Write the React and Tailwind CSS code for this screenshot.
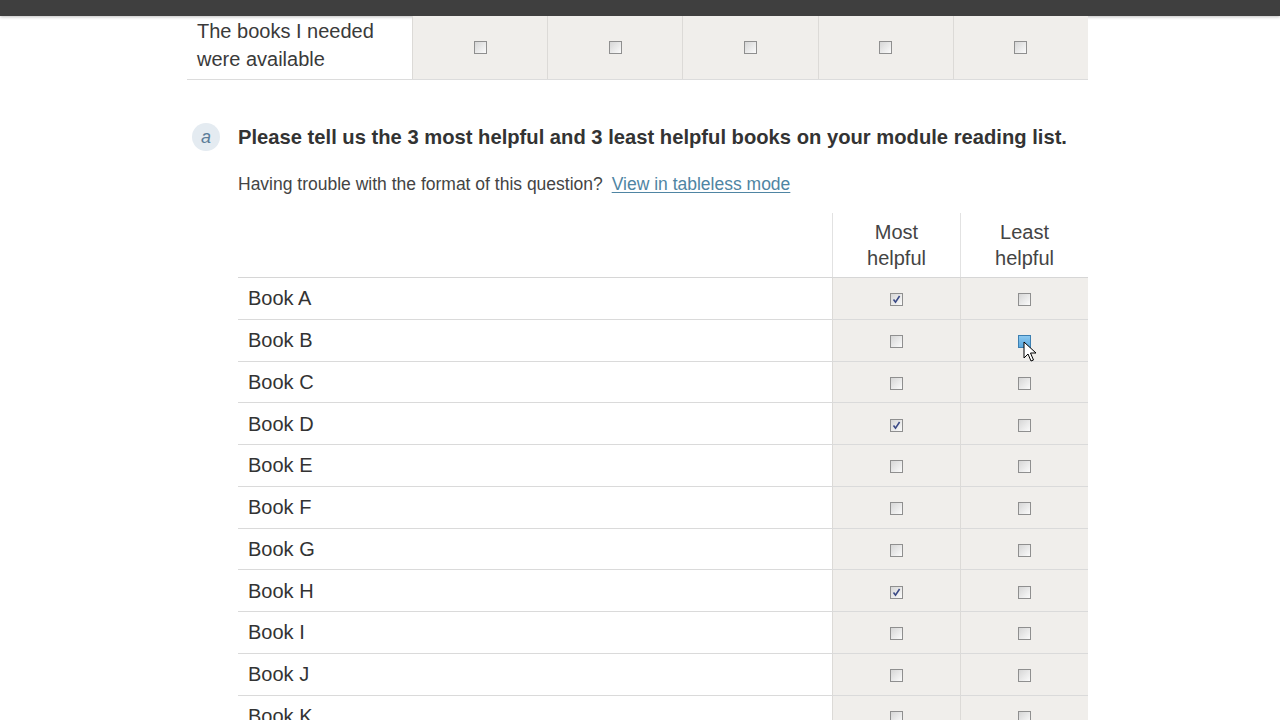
import React from 'react';

const books = ['A', 'B', 'C', 'D', 'E', 'F', 'G', 'H', 'I', 'J', 'K'];
const mostChecked = ['A', 'D', 'H'];

const Checkbox = ({ checked, hover }) => {
  if (hover) {
    return (
      <span className="block w-[13px] h-[13px] border border-[#3c7fb1] bg-gradient-to-b from-[#8cc8ef] to-[#5aa9e0]"></span>
    );
  }
  return (
    <span className="relative flex items-center justify-center w-[13px] h-[13px] border border-[#8f8f8f] bg-gradient-to-br from-[#d6d6d6] to-[#fbfbfb]">
      {checked && (
        <svg width="9" height="9" viewBox="0 0 9 9" className="block">
          <path d="M1.5 4.5 L3.5 7.2 L7.6 1" fill="none" stroke="#3b4a86" strokeWidth="1.6" />
        </svg>
      )}
    </span>
  );
};

const Cursor = () => (
  <svg width="14" height="22" viewBox="0 0 14 22" className="absolute left-[5px] top-[6px]">
    <path d="M1 1 L1 17 L5 13 L8 20 L10.5 19 L7.5 12 L13 12 Z" fill="#fff" stroke="#000" strokeWidth="1" strokeLinejoin="round" />
  </svg>
);

export default function App() {
  return (
    <div className="bg-white text-[#333] font-['Liberation_Sans',Arial,sans-serif] overflow-hidden h-[720px]">
      {/* window bar */}
      <div className="h-4 bg-[#3f3f3f] shadow-[0_1px_3px_rgba(0,0,0,0.25)]"></div>

      {/* previous question row */}
      <div className="ml-[187px] w-[901px] flex h-[64px] border-b border-[#dcdcdc]">
        <div className="w-[225px] pl-[10px] pt-[1px] text-[20px] leading-[28px] text-[#3a3a3a]">
          The books I needed were available
        </div>
        {[0, 1, 2, 3, 4].map((i) => (
          <div key={i} className="flex-1 bg-[#f0eeeb] border-l border-[#dcdad7] flex items-center justify-center">
            <Checkbox />
          </div>
        ))}
      </div>

      {/* question heading */}
      <div className="ml-[192px] mt-[43px] flex items-center gap-[18px] h-7">
        <div className="w-7 h-7 rounded-full bg-[#e4ebf1] flex items-center justify-center">
          <span className="italic text-[18px] text-[#5b7c98] leading-none -mt-[1px]">a</span>
        </div>
        <h2 className="font-bold text-[20.2px] leading-[28px] text-[#333]">
          Please tell us the 3 most helpful and 3 least helpful books on your module reading list.
        </h2>
      </div>

      <div className="ml-[238px] mt-[21px] text-[17.5px] leading-[24px] text-[#444]">
        Having trouble with the format of this question?{' '}
        <a className="ml-[4px] text-[#4f85a3] underline underline-offset-2">View in tableless mode</a>
      </div>

      {/* matrix */}
      <div className="ml-[238px] mt-[17px] w-[850px]">
        <div className="flex h-[65px] border-b border-[#d6d6d6]">
          <div className="flex-1"></div>
          <div className="w-32 border-l border-[#e2e2e2] text-center text-[20px] leading-[26px] text-[#444] pt-[6px]">
            Most<br />helpful
          </div>
          <div className="w-32 border-l border-[#e2e2e2] text-center text-[20px] leading-[26px] text-[#444] pt-[6px]">
            Least<br />helpful
          </div>
        </div>
        {books.map((b) => (
          <div key={b} className="flex h-[41.75px] border-b border-[#dadada]">
            <div className="flex-1 pl-[10px] flex items-center text-[20px] text-[#333]">Book {b}</div>
            <div className="w-32 pt-[3px] bg-[#f0eeeb] border-l border-[#dcdad7] flex items-center justify-center">
              <Checkbox checked={mostChecked.includes(b)} />
            </div>
            <div className="w-32 pt-[3px] bg-[#f0eeeb] border-l border-[#dcdad7] flex items-center justify-center">
              <div className="relative">
                <Checkbox hover={b === 'B'} />
                {b === 'B' && <Cursor />}
              </div>
            </div>
          </div>
        ))}
      </div>
    </div>
  );
}
